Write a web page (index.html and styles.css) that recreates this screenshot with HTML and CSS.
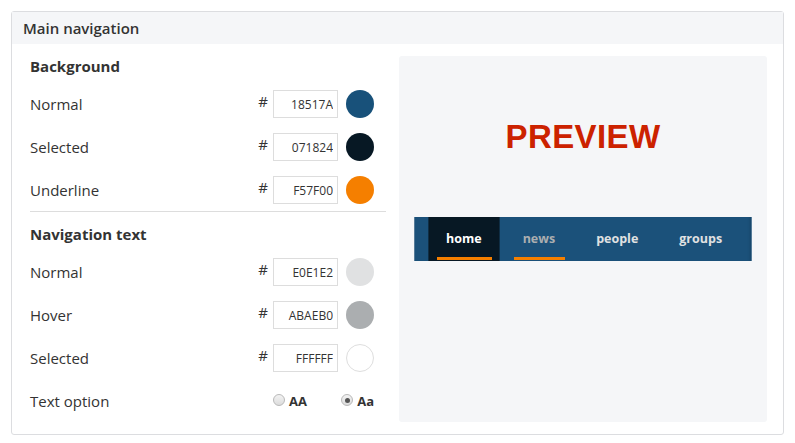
FILE: index.html
```html
<!DOCTYPE html>
<html lang="en">
<head>
<meta charset="utf-8">
<title>Main navigation</title>
<link rel="stylesheet" href="styles.css">
</head>
<body>
<div class="panel">
  <div class="panel-header">Main navigation</div>
  <div class="panel-body">
    <div class="settings">
      <h3 class="group-title">Background</h3>
      <div class="row">
        <span class="label">Normal</span>
        <span class="hash">#</span>
        <input class="hex" type="text" value="18517A">
        <span class="swatch" style="background:#18517A"></span>
      </div>
      <div class="row">
        <span class="label">Selected</span>
        <span class="hash">#</span>
        <input class="hex" type="text" value="071824">
        <span class="swatch" style="background:#071824"></span>
      </div>
      <div class="row">
        <span class="label">Underline</span>
        <span class="hash">#</span>
        <input class="hex" type="text" value="F57F00">
        <span class="swatch" style="background:#F57F00"></span>
      </div>
      <hr class="divider">
      <h3 class="group-title group-title--second">Navigation text</h3>
      <div class="row">
        <span class="label">Normal</span>
        <span class="hash">#</span>
        <input class="hex" type="text" value="E0E1E2">
        <span class="swatch" style="background:#E0E1E2"></span>
      </div>
      <div class="row">
        <span class="label">Hover</span>
        <span class="hash">#</span>
        <input class="hex" type="text" value="ABAEB0">
        <span class="swatch" style="background:#ABAEB0"></span>
      </div>
      <div class="row">
        <span class="label">Selected</span>
        <span class="hash">#</span>
        <input class="hex" type="text" value="FFFFFF">
        <span class="swatch swatch--white" style="background:#FFFFFF"></span>
      </div>
      <div class="row">
        <span class="label">Text option</span>
        <div class="options">
          <label class="option"><span class="radio"></span><span class="option-text">AA</span></label>
          <label class="option"><span class="radio radio--checked"></span><span class="option-text">Aa</span></label>
        </div>
      </div>
    </div>
    <div class="preview">
      <div class="preview-title">PREVIEW</div>
      <nav class="nav">
        <a class="nav-item nav-item--selected">home</a>
        <a class="nav-item nav-item--hover">news</a>
        <a class="nav-item">people</a>
        <a class="nav-item">groups</a>
      </nav>
    </div>
  </div>
</div>
</body>
</html>
```

FILE: styles.css
```css
* { box-sizing: border-box; }

body {
  margin: 0;
  background: #ffffff;
  font-family: "Open Sans", "Noto Sans", sans-serif;
  color: #333333;
}

.panel {
  margin: 11px;
  width: 773px;
  border: 1px solid #dcdde0;
  border-radius: 3px;
  background: #ffffff;
}

.panel-header {
  height: 32px;
  line-height: 32px;
  padding-left: 11px;
  background: #f5f6f8;
  font-size: 15px;
  font-weight: 600;
  color: #333333;
}

.panel-body {
  display: flex;
  gap: 13px;
  padding: 12px 16px 12px 18px;
}

.settings {
  width: 356px;
  display: flex;
  flex-direction: column;
  padding-bottom: 7px;
}

.group-title {
  margin: 0;
  height: 19px;
  line-height: 20px;
  font-size: 15px;
  font-weight: 700;
  color: #333333;
}

.group-title--second {
  margin-top: 12px;
}

.row {
  display: flex;
  align-items: center;
  height: 28px;
  margin-top: 15px;
  padding-right: 12px;
}

.label {
  flex: 1;
  font-size: 15px;
  color: #333333;
  margin-top: -1px;
}

.hash {
  font-size: 15px;
  color: #333333;
  margin-right: 5px;
  margin-bottom: 7px;
}

.hex {
  width: 65px;
  height: 28px;
  border: 1px solid #dddddd;
  border-radius: 0;
  padding: 0 4px 0 0;
  text-align: right;
  font-family: "Open Sans", "Noto Sans", sans-serif;
  font-size: 12px;
  color: #333333;
  background: #ffffff;
  outline: none;
}

.swatch {
  width: 28px;
  height: 28px;
  border-radius: 50%;
  margin-left: 8px;
}

.swatch--white {
  border: 1px solid #dedede;
}

.divider {
  margin: 7px 0 0;
  border: 0;
  border-top: 1px solid #dddddd;
  height: 0;
}

.options {
  display: flex;
  justify-content: space-between;
  width: 101px;
}

.option {
  display: flex;
  align-items: center;
  gap: 4px;
}

.radio {
  width: 12px;
  height: 12px;
  border-radius: 50%;
  border: 1px solid #b9b9b9;
  background: linear-gradient(#f3f3f3, #dcdcdc);
  display: flex;
  align-items: center;
  justify-content: center;
  margin-top: -2px;
}

.radio--checked::after {
  content: "";
  width: 5px;
  height: 5px;
  border-radius: 50%;
  background: #555555;
}

.option-text {
  font-size: 13px;
  font-weight: 700;
  color: #333333;
}

.preview {
  width: 368px;
  background: #f5f6f8;
  border-radius: 3px;
  padding: 0 15px;
  display: flex;
  flex-direction: column;
  align-items: center;
}

.preview-title {
  margin-top: 64px;
  height: 33px;
  line-height: 33px;
  font-family: "Liberation Sans", Arial, sans-serif;
  font-weight: 700;
  font-size: 33px;
  letter-spacing: 0.4px;
  color: #cc2200;
}

.nav {
  margin-top: 64px;
  align-self: stretch;
  height: 44px;
  background: #1b517a;
  border-left: 1px solid #567b98;
  border-right: 1px solid #567b98;
  box-shadow: inset -3px 0 3px -2px rgba(0, 0, 0, 0.15);
  display: flex;
  padding-left: 14px;
  gap: 7px;
}

.nav-item {
  position: relative;
  padding: 0 17px;
  line-height: 44px;
  font-size: 12.5px;
  font-weight: 700;
  color: #e0e1e2;
}

.nav-item--selected {
  background: #071824;
  color: #ffffff;
  box-shadow: -1px 0 0 #0f2e45, 1px 0 0 #0f2e45;
}

.nav-item--hover {
  color: #abaeb0;
}

.nav-item--selected::after,
.nav-item--hover::after {
  content: "";
  position: absolute;
  left: 8px;
  right: 7px;
  bottom: 1px;
  height: 3px;
  background: #f57f00;
}
```
